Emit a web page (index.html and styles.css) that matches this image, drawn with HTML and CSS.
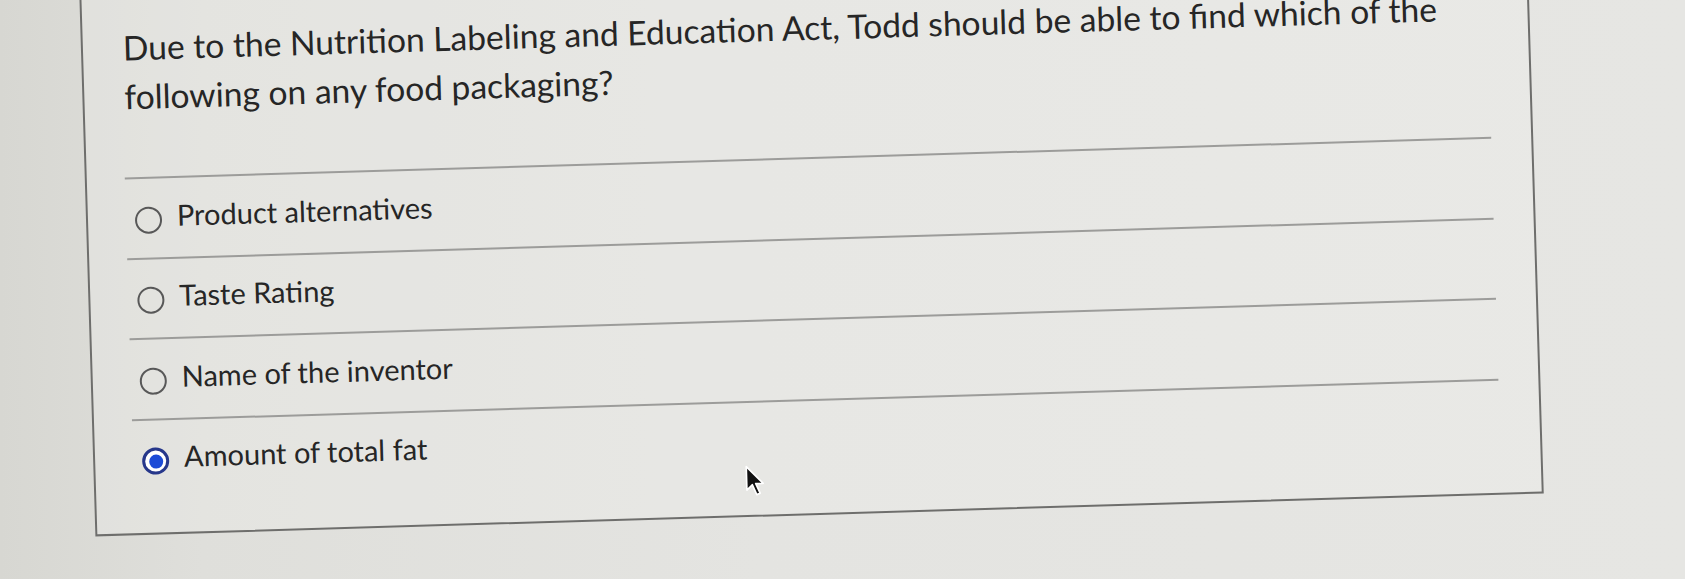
FILE: index.html
```html
<!DOCTYPE html>
<html lang="en">
<head>
<meta charset="utf-8">
<title>Quiz question</title>
<link rel="stylesheet" href="styles.css">
</head>
<body>
<div class="stage">
  <div class="card">
    <div class="question">Due to the Nutrition Labeling and Education Act, Todd should be able to find which of the following on any food packaging?</div>
    <div class="answers">
      <label class="answer"><span class="radio"></span><span class="answer-text">Product alternatives</span></label>
      <label class="answer"><span class="radio"></span><span class="answer-text">Taste Rating</span></label>
      <label class="answer"><span class="radio"></span><span class="answer-text">Name of the inventor</span></label>
      <label class="answer"><span class="radio radio-on"><span class="radio-dot"></span></span><span class="answer-text">Amount of total fat</span></label>
    </div>
  </div>
  <svg class="cursor" width="20" height="32" viewBox="0 0 13 21" aria-hidden="true">
    <path d="M1 1 L1 16.5 L4.6 13 L7.4 19.6 L9.6 18.7 L6.9 12.3 L11.8 12.3 Z" fill="#111" stroke="#fff" stroke-width="1.1" stroke-linejoin="round"/>
  </svg>
</div>
</body>
</html>
```

FILE: styles.css
```css
html, body {
  margin: 0;
  padding: 0;
  height: 100%;
  overflow: hidden;
}

body {
  background: linear-gradient(90deg, #d7d7d2 0%, #dfdfdb 12%, #e4e4e1 45%, #e6e6e3 100%);
  font-family: Lato, "Open Sans", "Liberation Sans", sans-serif;
  color: #262626;
}

.stage {
  position: relative;
  width: 1700px;
  height: 600px;
  transform: rotate(-1.7deg);
  transform-origin: 0 0;
}

.card {
  box-sizing: border-box;
  width: 1449px;
  margin: -14.7px 0 0 79px;
  border: 2px solid #6e6e6c;
  padding: 40px 40px 34px 38px;
  background: rgba(238, 238, 235, 0.35);
}

.question {
  padding-left: 2px;
  font-size: 33.6px;
  line-height: 49px;
  padding-bottom: 56px;
}

.answers {
  display: flex;
  flex-direction: column;
}

.answer {
  display: flex;
  align-items: center;
  gap: 15px;
  height: 74.5px;
  border-top: 2px solid #9c9c9a;
  padding: 4px 0 0 9px;
  box-sizing: content-box;
  font-size: 29px;
}

.answer-text {
  margin-bottom: 10px;
}

.radio {
  box-sizing: border-box;
  flex: none;
  width: 27px;
  height: 27px;
  border-radius: 50%;
  border: 2px solid #585858;
  display: flex;
  align-items: center;
  justify-content: center;
}

.radio-on {
  border: 3px solid #26378a;
  background: #ffffff;
}

.radio-dot {
  width: 14px;
  height: 14px;
  border-radius: 50%;
  background: #1c4bd6;
}

.cursor {
  position: absolute;
  left: 730px;
  top: 502px;
}
```
